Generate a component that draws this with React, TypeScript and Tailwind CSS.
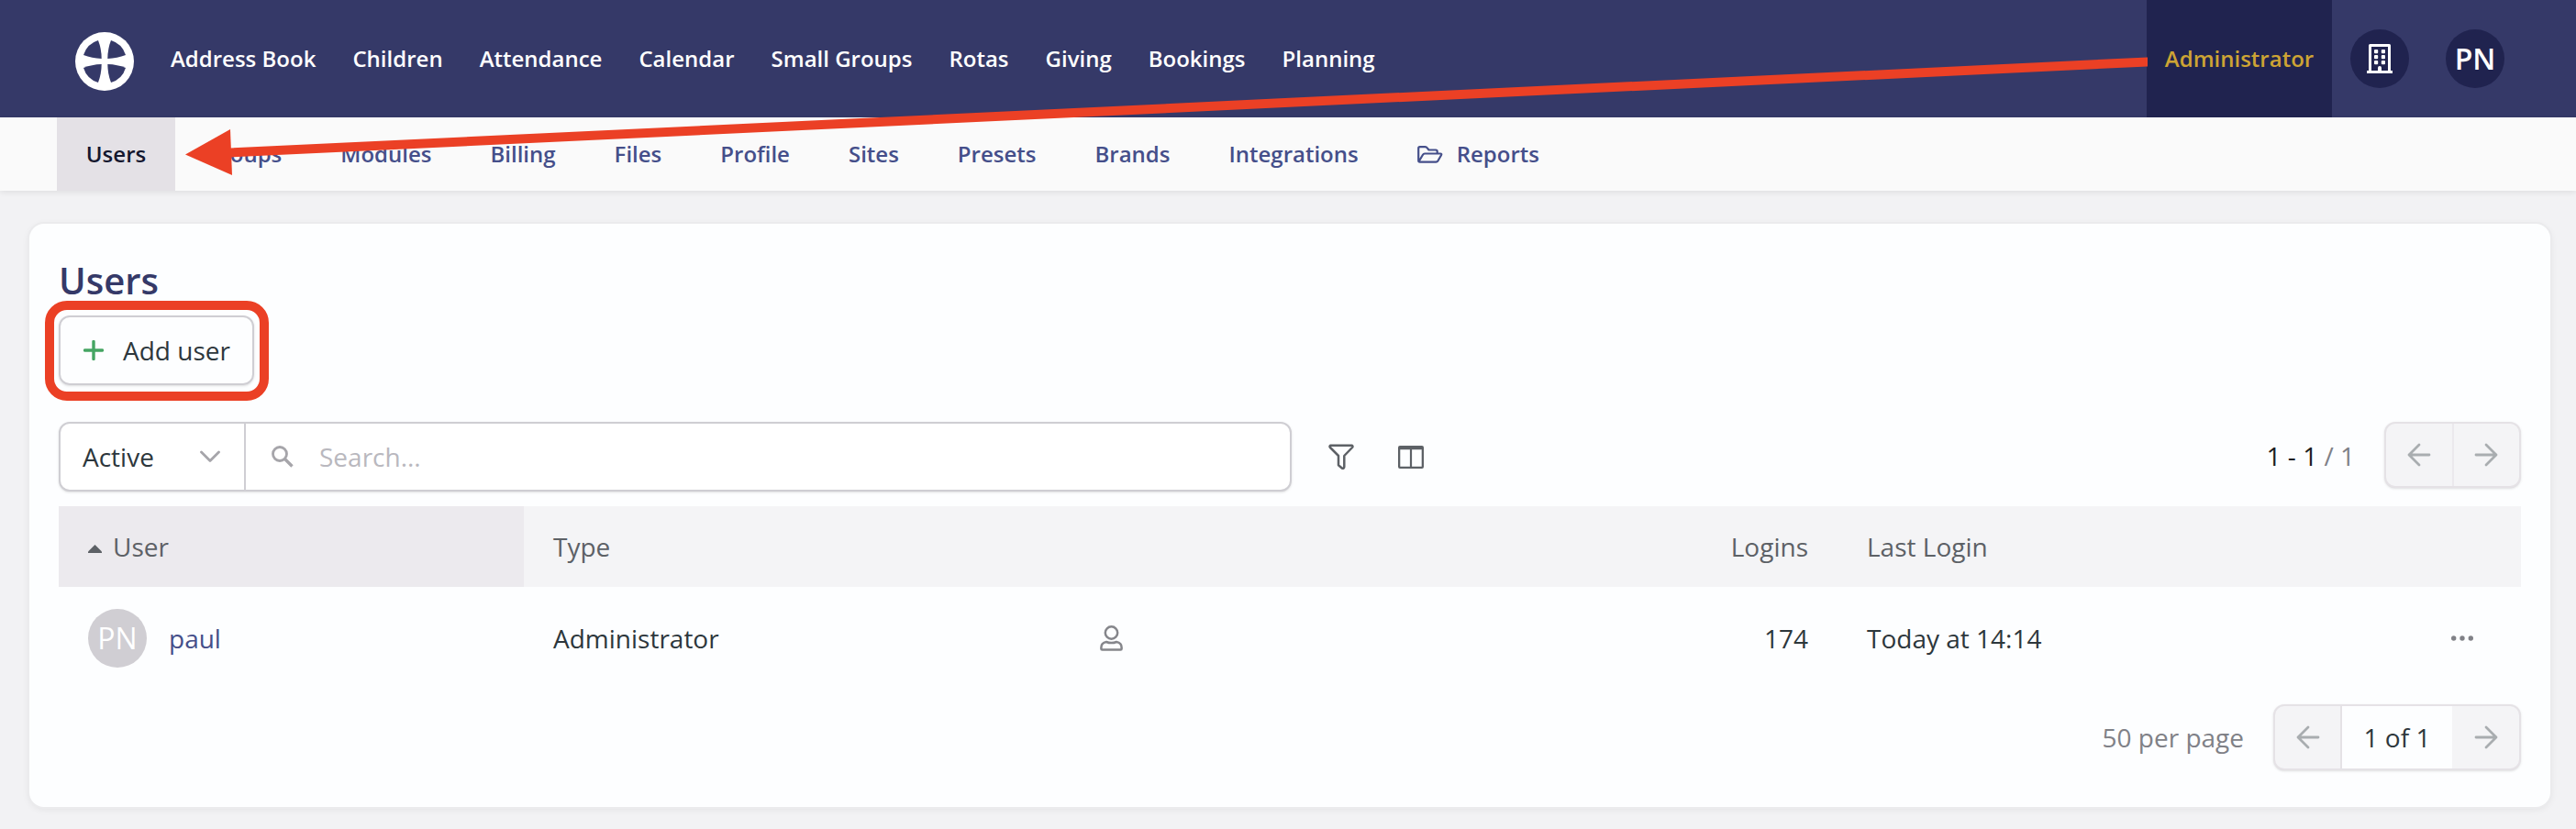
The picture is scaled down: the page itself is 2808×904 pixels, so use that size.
import React from "react";

const NAV_ITEMS = [
  "Address Book", "Children", "Attendance", "Calendar", "Small Groups",
  "Rotas", "Giving", "Bookings", "Planning",
];

const TABS = [
  "Groups", "Modules", "Billing", "Files", "Profile",
  "Sites", "Presets", "Brands", "Integrations",
];

function Logo() {
  return (
    <svg width="64" height="64" viewBox="0 0 64 64" className="shrink-0">
      <circle cx="32" cy="32" r="32" fill="#fff" />
      <g fill="#353968">
        <path d="M25 9A24 24 0 0 0 9 25Q18 28.600 28.700 28.900Q28.600 18 25 9Z" />
        <path d="M39 9A24 24 0 0 1 55 25Q46 28.600 35.300 28.900Q35.400 18 39 9Z" />
        <path d="M25 55A24 24 0 0 1 9 39Q18 35.400 28.700 35.100Q28.600 46 25 55Z" />
        <path d="M39 55A24 24 0 0 0 55 39Q46 35.400 35.300 35.100Q35.400 46 39 55Z" />
      </g>
    </svg>
  );
}

function BuildingIcon() {
  return (
    <svg width="28" height="32" viewBox="0 0 28 32" fill="#fff">
      <path fillRule="evenodd" d="M2 1.500Q2 0 3.500 0H24.500Q26 0 26 1.500V29H28V32H0V29H2ZM5 3V29H12V26Q12 24 14 24Q16 24 16 26V29H23V3Z" />
      {[6, 12, 18].map((y) => (
        <g key={y}>
          <rect x="8" y={y} width="4.200" height="4.200" rx="1" />
          <rect x="15.800" y={y} width="4.200" height="4.200" rx="1" />
        </g>
      ))}
    </svg>
  );
}

function ArrowLeft() {
  return (
    <svg width="26" height="26" viewBox="0 0 26 26" fill="none" stroke="#a9adb0" strokeWidth="2.800" strokeLinecap="round" strokeLinejoin="round">
      <path d="M24 13H2M13 2L2 13L13 24" />
    </svg>
  );
}

function ArrowRight() {
  return (
    <svg width="26" height="26" viewBox="0 0 26 26" fill="none" stroke="#a9adb0" strokeWidth="2.800" strokeLinecap="round" strokeLinejoin="round">
      <path d="M2 13H24M13 2L24 13L13 24" />
    </svg>
  );
}

export default function App() {
  return (
    <div className="relative h-[904px] w-[2808px] overflow-hidden bg-[#f2f2f4] font-['Open_Sans','Noto_Sans',sans-serif] text-[28px] leading-10 text-[#2d373c]">
      <header className="flex h-32 items-center bg-[#353968] pl-[82px] pr-[78px] text-[24px] font-semibold text-white">
        <div className="pt-[6px]"><Logo /></div>
        <nav className="ml-10 flex gap-10">
          {NAV_ITEMS.map((item) => (
            <a key={item} className="whitespace-nowrap">{item}</a>
          ))}
        </nav>
        <div className="ml-auto flex h-full w-[202px] items-center justify-center bg-[#20234f] text-[#cda434]">
          Administrator
        </div>
        <div className="ml-5 flex size-16 items-center justify-center rounded-full bg-[#20234f]">
          <BuildingIcon />
        </div>
        <div className="ml-10 flex size-16 items-center justify-center rounded-full bg-[#20234f] text-[32px]">PN</div>
      </header>

      <nav className="flex h-20 items-center bg-[#fafafa] pl-[62px] text-[24px] font-semibold text-[#454f8a] shadow-[0_2px_6px_rgba(0,0,0,0.08)]">
        <a className="flex h-full w-[129px] items-center justify-center bg-[#e4e1e6] text-[#14172e]">Users</a>
        <div className="ml-8 flex gap-16">
          {TABS.map((tab) => (
            <a key={tab} className="whitespace-nowrap">{tab}</a>
          ))}
          <a className="flex items-center">
            <svg width="28" height="19" viewBox="0 0 28 19" fill="none" stroke="currentColor" strokeWidth="2.200" strokeLinejoin="round" className="mr-[15px]">
              <path d="M1.200 16V2.700Q1.200 1.200 2.700 1.200H8.500Q10 1.200 10.800 2.300L12.500 4.500H20Q21.700 4.500 21.700 6.200V8.500M1.500 17.200L6 9.700Q6.700 8.500 8 8.500H25Q27 8.500 26 10.300L22.500 16.300Q21.700 17.600 20.300 17.600H2.700Q1.200 17.600 1.200 16" />
            </svg>
            Reports
          </a>
        </div>
      </nav>

      <main className="ml-8 mt-9 h-[636px] w-[2748px] rounded-2xl bg-[#fdfeff] px-8 pt-[34px] shadow-[0_0_0_2px_#ebebed,0_2px_8px_rgba(0,0,0,0.08)]">
        <h1 className="h-[66px] text-[40px] font-semibold leading-[56px] text-[#353968]">Users</h1>

        <button className="relative flex h-[76px] w-[213px] items-center rounded-xl border-2 border-[#cfced3] pl-[25px] shadow-sm">
          <svg width="22" height="22" viewBox="0 0 22 22" stroke="#45a563" strokeWidth="3.400" strokeLinecap="round" className="mr-[21px]">
            <path d="M11 1.500V20.500M1.500 11H20.500" />
          </svg>
          Add user
          <span className="absolute -left-[17px] -top-[18px] h-[109px] w-[244px] rounded-3xl border-[10px] border-[#eb4025]" />
        </button>

        <div className="mt-10 flex h-[76px]">
          <div className="flex h-full w-[1344px] rounded-xl border-2 border-[#cfced3] bg-white shadow-sm">
            <div className="flex w-[202px] items-center justify-between border-r-2 border-[#cfced3] pl-6 pr-[26px]">
              Active
              <svg width="22" height="14" viewBox="0 0 22 14" fill="none" stroke="#a6a5aa" strokeWidth="2.800" strokeLinecap="round" strokeLinejoin="round">
                <path d="M1.500 2L11 11.500L20.500 2" />
              </svg>
            </div>
            <div className="flex items-center pl-7 text-[#b9b8be]">
              <svg width="24" height="24" viewBox="0 0 24 24" fill="none" stroke="#a6a5aa" strokeWidth="2.800" className="mr-7">
                <circle cx="9" cy="9" r="7.500" />
                <path d="M14.500 14.500L22.500 22.500" strokeWidth="3.400" />
              </svg>
              Search...
            </div>
          </div>
          <svg width="28" height="30" viewBox="0 0 28 30" fill="none" stroke="#5d6166" strokeWidth="2.500" strokeLinejoin="round" className="ml-10 mt-6">
            <path d="M2.500 1.700H25.500Q27.200 2.600 26 4L17.300 13V25Q17 27.500 14.800 26.500L11 23.300V13L2 4Q0.800 2.600 2.500 1.700Z" />
          </svg>
          <svg width="28" height="26" viewBox="0 0 28 26" className="ml-12 mt-[26px]">
            <path fill="#5d6166" fillRule="evenodd" d="M2 0H26Q28 0 28 2V23Q28 25 26 25H2Q0 25 0 23V2Q0 0 2 0ZM2.300 4.300V22.700H12.900V4.300ZM15.100 4.300V22.700H25.700V4.300Z" />
          </svg>
          <div className="ml-auto mr-8 pt-[17px] text-[#1b1d22]">
            1 - 1 <span className="text-[#808187]">/ 1</span>
          </div>
          <div className="flex h-[72px] w-[149px] overflow-hidden rounded-xl border-2 border-[#e5e2e6] bg-[#f4f4f6] shadow-sm">
            <div className="flex flex-1 items-center justify-center border-r-2 border-[#ebe9ed]"><ArrowLeft /></div>
            <div className="flex flex-1 items-center justify-center"><ArrowRight /></div>
          </div>
        </div>

        <div className="mt-4 flex h-[88px] w-[2684px] items-center bg-[#f4f4f6] text-[#5d6166]">
          <div className="flex h-full w-[507px] items-center bg-[#eceaee] pl-8">
            <svg width="15" height="9" viewBox="0 0 15 9" className="mr-3 mt-1">
              <path d="M7.500 0L15 7.500V9H0V7.500Z" fill="#5d6166" />
            </svg>
            User
          </div>
          <div className="w-[597px] pl-8">Type</div>
          <div className="w-[803px] text-right">Logins</div>
          <div className="ml-16">Last Login</div>
        </div>

        <div className="flex h-28 w-[2684px] items-center">
          <div className="flex w-[507px] items-center pl-8 text-[#454f8a]">
            <div className="mr-6 flex size-16 items-center justify-center rounded-full bg-[#d0ced3] text-[32px] text-white">PN</div>
            paul
          </div>
          <div className="w-[597px] pl-8">Administrator</div>
          <div className="w-[200px] pl-[31px]">
            <svg width="25" height="28" viewBox="0 0 25 28" fill="none" stroke="#85868b" strokeWidth="2.500" strokeLinejoin="round">
              <circle cx="12.500" cy="8" r="6.700" />
              <path d="M7 18Q12.500 20.200 18 18Q23.600 19 23.600 24V25.500Q23.600 26.600 22.500 26.600H2.500Q1.400 26.600 1.400 25.500V24Q1.400 19 7 18Z" />
            </svg>
          </div>
          <div className="w-[603px] text-right">174</div>
          <div className="ml-16">Today at 14:14</div>
          <svg width="24" height="6" viewBox="0 0 24 6" fill="#808187" className="ml-auto mr-[52px]">
            <circle cx="2.700" cy="3" r="2.700" />
            <circle cx="12" cy="3" r="2.700" />
            <circle cx="21.300" cy="3" r="2.700" />
          </svg>
        </div>

        <div className="mt-4 flex w-[2684px] items-center justify-end">
          <span className="mr-8 text-[#808187]">50 per page</span>
          <div className="flex h-[72px] w-[270px] overflow-hidden rounded-xl border-2 border-[#e5e2e6] bg-[#f4f4f6] shadow-sm">
            <div className="flex w-[73px] items-center justify-center border-r-2 border-[#e5e2e6]"><ArrowLeft /></div>
            <div className="flex w-[120px] items-center justify-center bg-[#fdfeff]">1 of 1</div>
            <div className="flex w-[73px] items-center justify-center"><ArrowRight /></div>
          </div>
        </div>
      </main>

      {/* arrow from Administrator to the Users tab */}
      <svg width="2808" height="904" viewBox="0 0 2808 904" className="pointer-events-none absolute left-0 top-0" fill="#eb4025">
        <path d="M2341 62.500L251 161.500V171.500L2341 72.500Z" />
        <path d="M202 168.500L251 141L253 191Z" />
      </svg>
    </div>
  );
}
